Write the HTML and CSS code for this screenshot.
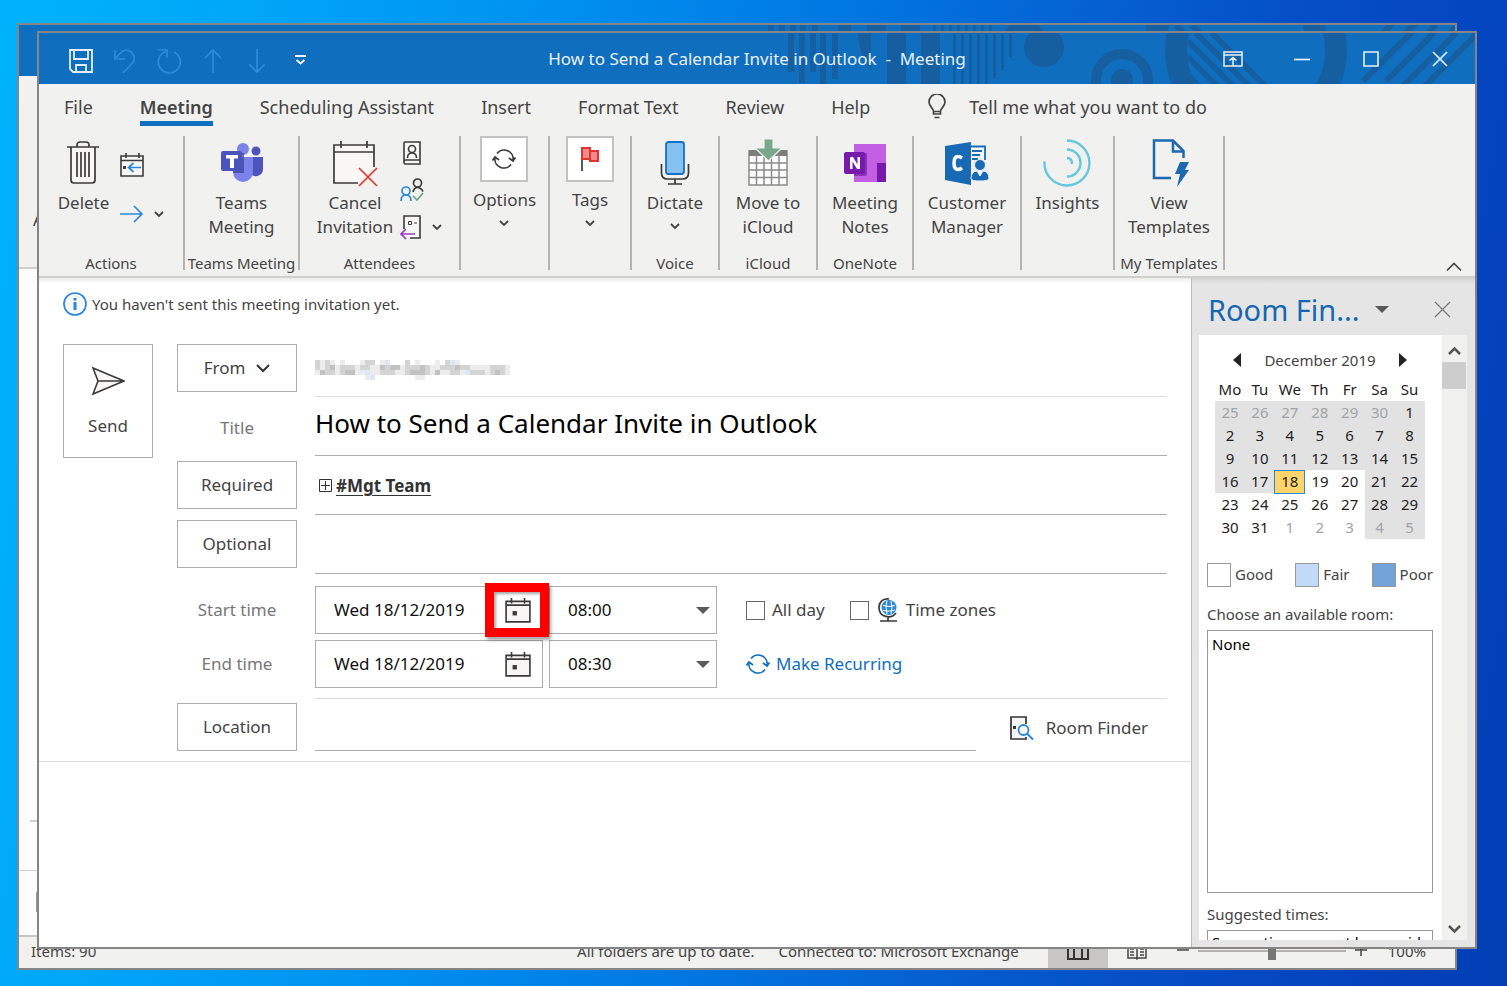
FILE: index.html
```html
<!DOCTYPE html>
<html lang="en">
<head>
<meta charset="utf-8">
<title>How to Send a Calendar Invite in Outlook - Meeting</title>
<link rel="stylesheet" href="styles.css">
</head>
<body>
<svg class="defs" aria-hidden="true">
  <defs>
    <symbol id="pattern" viewBox="775 33 700 51">
      <g fill="#155fa0">
        <path d="M788 33h6v39h-6zM799 33h6v50h-6zM810 33h6v39h-6zM820 33h6v51h-6zM832 33h6v46h-6zM858 33h13v37q-12-14-13-37zM887 33h19v51h-19zM921 33h19v51h-19z"/>
        <path d="M953 33h3v51h-3zM961 33h3v51h-3zM969 33h3v51h-3zM977 33h3v51h-3zM985 33h3v51h-3zM993 33h3v46h-3zM1001 33h3v38h-3zM1009 33h3v24h-3z"/>
        <circle cx="1044" cy="47" r="20"/>
        <circle cx="1122" cy="80" r="11"/>
      </g>
      <g fill="none" stroke="#155fa0">
        <circle cx="1122" cy="80" r="26" stroke-width="10"/>
        <circle cx="1256" cy="50" r="80" stroke-width="22"/>
        <path stroke-width="6" d="M1188 75l10 10M1188 57l29 29M1188 41l45 45M1196 33l53 53M1212 33l53 53M1363 81l50-50M1386 81l50-50M1402 87l54-54M1424 87l54-54"/>
      </g>
    </symbol>
    <symbol id="chev" viewBox="0 0 10 6"><path d="M1 1l4 4 4-4" fill="none" stroke="#444" stroke-width="1.8"/></symbol>
    <symbol id="recur" viewBox="0 0 24 20">
      <path d="M5 4.500A9 9 0 0 1 21 11.500M19 15.500A9 9 0 0 1 3 8.500M.5 11.500L3 8l4 3M17 9l4 3 2.500-3.500" fill="none" stroke="currentColor" stroke-width="1.700"/>
    </symbol>
    <symbol id="cal" viewBox="0 0 24 24">
      <path d="M1 4h22v19H1z" fill="#f8f7f6" stroke="#3a3a3a" stroke-width="1.500"/>
      <path d="M1 7.500h22M6 1v5M18 1v5" stroke="#3a3a3a" stroke-width="1.500" fill="none"/>
      <path d="M7 13h4v4H7z" fill="#3a3a3a"/>
    </symbol>
  </defs>
</svg>

<div class="window window-back">
  <div class="back-title"><svg class="pattern"><use href="#pattern"/></svg></div>
  <div class="back-ribbon">A</div>
  <div class="back-body">
    <i class="stub stub-a"></i><i class="stub stub-b"></i><i class="stub stub-c"></i>
  </div>
  <footer class="status">
    <span>Items: 90</span>
    <span class="status-sync">All folders are up to date.</span>
    <span class="status-conn">Connected to: Microsoft Exchange</span>
    <button class="view on" aria-label="Normal view"><svg width="24" height="16" viewBox="0 0 24 16"><path d="M2 0v14h20V0M8 0v14M16 0v14" fill="none" stroke="#333" stroke-width="2"/></svg></button>
    <button class="view" aria-label="Reading view"><svg width="20" height="16" viewBox="0 0 20 16"><path d="M1 1h8l1 1 1-1h8v12h-8l-1 1-1-1H1zM10 2v12M3 4h4M3 7h4M3 10h4M13 4h4M13 7h4M13 10h4" fill="none" stroke="#444" stroke-width="1.500"/></svg></button>
    <button class="zoom-btn" aria-label="Zoom out"><svg width="12" height="12" viewBox="0 0 12 12"><path d="M0 5h12" stroke="#444" stroke-width="1.500"/></svg></button>
    <input class="zoom" type="range" aria-label="Zoom" min="0" max="100" value="50">
    <button class="zoom-btn zoom-in" aria-label="Zoom in"><svg width="12" height="12" viewBox="0 0 12 12"><path d="M0 5h12M6 0v11" stroke="#444" stroke-width="1.500"/></svg></button>
    <span class="percent">100%</span>
  </footer>
</div>

<div class="window window-front">
  <header class="titlebar">
    <svg class="pattern"><use href="#pattern"/></svg>
    <div class="quick">
      <button aria-label="Save"><svg width="26" height="26" viewBox="0 0 26 26" fill="none" stroke="#e3eef8" stroke-width="1.800"><path d="M2 2h22v22H5l-3-3zM6 2v9h14V2M8 24v-7h10v7"/></svg></button>
      <button aria-label="Undo"><svg width="26" height="26" viewBox="0 0 26 26" fill="none" stroke="#2f8bdb" stroke-width="1.700"><path d="M3 2v9h10M3 11l7-7.500a8 8 0 0 1 11 11L11 25"/></svg></button>
      <button aria-label="Redo"><svg width="26" height="26" viewBox="0 0 26 26" fill="none" stroke="#2f8bdb" stroke-width="1.700"><path d="M2 2h9v8M10 3.500A11 11 0 1 0 18 4"/></svg></button>
      <button aria-label="Previous"><svg width="26" height="26" viewBox="0 0 26 26" fill="none" stroke="#2f8bdb" stroke-width="1.700"><path d="M13 25V2M5 10l8-8 8 8"/></svg></button>
      <button aria-label="Next"><svg width="26" height="26" viewBox="0 0 26 26" fill="none" stroke="#2f8bdb" stroke-width="1.700"><path d="M13 1v23M5 16l8 8 8-8"/></svg></button>
      <button aria-label="Customize toolbar"><svg width="26" height="26" viewBox="0 0 26 26" fill="none" stroke="#eef5fb" stroke-width="2"><path d="M7 8h11M8.500 12l4 3.500 4-3.500"/></svg></button>
    </div>
    <h1 class="caption">How to Send a Calendar Invite in Outlook&nbsp; -&nbsp; Meeting</h1>
    <div class="controls">
      <button aria-label="Ribbon display options"><svg width="20" height="16" viewBox="0 0 20 16" fill="none" stroke="#e8f1f9" stroke-width="1.500"><path d="M1 1h18v14H1zM1 4h18M10 15V6.500M6.500 9.500L10 6.500l3.500 3"/></svg></button>
      <button aria-label="Minimize"><svg width="16" height="16" viewBox="0 0 16 16"><path d="M0 8.500h16" stroke="#e8f1f9" stroke-width="1.700"/></svg></button>
      <button aria-label="Maximize"><svg width="16" height="16" viewBox="0 0 16 16"><path d="M1 1h14v14H1z" fill="none" stroke="#e8f1f9" stroke-width="1.600"/></svg></button>
      <button aria-label="Close"><svg width="16" height="16" viewBox="0 0 16 16"><path d="M1 1l14 14M15 1L1 15" stroke="#e8f1f9" stroke-width="1.700"/></svg></button>
    </div>
  </header>

  <nav class="tabs">
    <a href="#file">File</a>
    <a href="#meeting" class="active">Meeting</a>
    <a href="#scheduling">Scheduling Assistant</a>
    <a href="#insert">Insert</a>
    <a href="#format">Format Text</a>
    <a href="#review">Review</a>
    <a href="#help">Help</a>
    <button class="tell"><svg width="18" height="26" viewBox="0 0 18 26" fill="none" stroke="#444" stroke-width="1.700"><path d="M5.500 20v-3c0-2.500-4.500-4.500-4.500-9a8 8 0 0 1 16 0c0 4.500-4.500 6.500-4.500 9v3zM5.500 17.500h7M6.500 23.500h5"/></svg>Tell me what you want to do</button>
  </nav>

  <div class="ribbon">
    <section class="group g-actions">
      <div class="tools">
        <button class="tool"><svg width="32" height="44" viewBox="0 0 32 44" fill="none" stroke="#3b3b3b" stroke-width="1.700"><path d="M4 6v33a3 3 0 0 0 3 3h18a3 3 0 0 0 3-3V6" fill="#f8f7f6"/><path d="M0 6h32M10 6V4a3 3 0 0 1 3-3h6a3 3 0 0 1 3 3v2M10 11v25M14 11v25M18 11v25M22 11v25"/></svg>Delete</button>
        <div class="stack">
          <button aria-label="Copy to my calendar"><svg width="24" height="26" viewBox="0 0 24 26" fill="none"><path d="M1 4h22v20H1z" fill="#f8f7f6" stroke="#3b3b3b" stroke-width="1.600"/><path d="M1 8.500h22M6 1v5M19 1v5" stroke="#3b3b3b" stroke-width="1.600"/><path d="M3 14h3v3H3z" fill="#3b3b3b"/><path d="M21 15.500H9M13.500 11l-5 4.500 5 4.500" stroke="#2b88d8" stroke-width="1.700"/></svg></button>
          <button aria-label="Forward" class="row"><svg width="24" height="20" viewBox="0 0 24 20" fill="none" stroke="#2b88d8" stroke-width="1.700"><path d="M0 10h22M14 2l8 8-8 8"/></svg><svg class="chev"><use href="#chev"/></svg></button>
        </div>
      </div>
      <h2>Actions</h2>
    </section>
    <section class="group g-teams">
      <div class="tools">
        <button class="tool"><svg width="44" height="44" viewBox="0 0 44 44"><circle cx="36" cy="10" r="4.500" fill="#4f54bd"/><circle cx="23" cy="8" r="6" fill="#7b83eb"/><path d="M31 16h12v12a7 7 0 0 1-12 5z" fill="#4f54bd"/><path d="M13 16h20v15a10 10 0 0 1-20 0z" fill="#7b83eb"/><path d="M13 12h11v20H13z" fill="#3d4290" opacity=".7"/><rect x="1" y="10" width="21" height="20" rx="2" fill="#4b53bc"/><path d="M6 14h12v3.500h-4V27h-4v-9.500H6z" fill="#fff"/></svg>Teams<br>Meeting</button>
      </div>
      <h2>Teams Meeting</h2>
    </section>
    <section class="group g-attendees">
      <div class="tools">
        <button class="tool"><svg width="46" height="46" viewBox="0 0 46 46" fill="none" stroke="#3b3b3b" stroke-width="1.700"><path d="M42 27V5H2v38h24" fill="#f8f7f6"/><path d="M2 12h40M9 1v7M35 1v7"/><path d="M27 28l18 18M45 28L27 46" stroke="#e3342c"/></svg>Cancel<br>Invitation</button>
        <div class="stack stack-people">
          <button aria-label="Address book"><svg width="24" height="26" viewBox="0 0 24 26" fill="none" stroke="#3b3b3b" stroke-width="1.600"><path d="M4 23V3q0-1 1-1h15v22H5q-1 0-1-2t2-2h14" fill="#f8f7f6"/><circle cx="12" cy="9" r="3.500"/><path d="M7.500 18q0-5 4.500-5t4.500 5"/></svg></button>
          <button aria-label="Check names"><svg width="24" height="26" viewBox="0 0 24 26" fill="none" stroke-width="1.700"><circle cx="17.500" cy="6" r="4" stroke="#3b3b3b"/><path d="M13 15q1-4.500 4.500-4.500T23 14.500" stroke="#3b3b3b"/><circle cx="6" cy="14" r="4" stroke="#2b88d8"/><path d="M1 24q0-6 5-6t5 6" stroke="#2b88d8"/><path d="M13 19l4 4 6-7" stroke="#6fa287"/></svg></button>
          <button aria-label="Response options" class="row"><svg width="24" height="26" viewBox="0 0 24 26" fill="none"><path d="M4 15V2h16v22H10" fill="#f8f7f6" stroke="#3b3b3b" stroke-width="1.600"/><path d="M8.500 7.500h3v3h-3zM14 9h3" stroke="#3b3b3b"/><path d="M15 20H2M6 15l-5 5 5 5" stroke="#9b3fc4" stroke-width="1.700"/></svg><svg class="chev"><use href="#chev"/></svg></button>
        </div>
      </div>
      <h2>Attendees</h2>
    </section>
    <section class="group g-options">
      <button class="tool"><span class="tile"><svg width="24" height="20" class="ink"><use href="#recur"/></svg></span>Options<svg class="chev"><use href="#chev"/></svg></button>
    </section>
    <section class="group g-tags">
      <button class="tool"><span class="tile"><svg width="18" height="26" viewBox="0 0 18 26"><path d="M1 3v22" stroke="#3b3b3b" stroke-width="1.700"/><path d="M1 2h8v11H1zM9 5h8v10H9z" fill="#f48a8a" stroke="#e3342c" stroke-width="2"/></svg></span>Tags<svg class="chev"><use href="#chev"/></svg></button>
    </section>
    <section class="group g-voice">
      <div class="tools">
        <button class="tool"><svg width="30" height="44" viewBox="0 0 30 44" fill="none"><path d="M1.500 23v9q0 6 6 6h15q6 0 6-6v-9M15 38v4.500M8 43h14" stroke="#3b3b3b" stroke-width="1.700"/><rect x="6" y="1" width="18" height="32" rx="2.500" fill="#86bff2" stroke="#1a6fc0" stroke-width="1.800"/></svg>Dictate<svg class="chev"><use href="#chev"/></svg></button>
      </div>
      <h2>Voice</h2>
    </section>
    <section class="group g-icloud">
      <div class="tools">
        <button class="tool"><svg width="40" height="48" viewBox="0 0 40 48"><path d="M1 12h38v34H1z" fill="#fff" stroke="#8a8a8a" stroke-width="1.500"/><path d="M1 11h38v6H1z" fill="#7d7d7d"/><path d="M1 24h38M1 31h38M1 38.500h38M8.500 16v30M16 16v30M23.500 16v30M31 16v30" stroke="#8a8a8a" stroke-width="1.500"/><path d="M16 0h9v9h9L20.500 22 7 9h9z" fill="#7aa88f" stroke="#f1f1ef" stroke-width="1.200"/></svg>Move to<br>iCloud</button>
      </div>
      <h2>iCloud</h2>
    </section>
    <section class="group g-onenote">
      <div class="tools">
        <button class="tool"><svg width="44" height="40" viewBox="0 0 44 40"><path d="M11 1h32v38H11z" fill="#c25fe3"/><path d="M34 20h9v19h-9z" fill="#7719aa"/><path d="M11 10h13v21q0 2-2 2H11z" fill="#8a35b5"/><rect x="1" y="9" width="21" height="22" rx="2" fill="#7719aa"/><path d="M7 26V14h3l4.500 7.500V14H17v12h-3l-4.500-7.500V26z" fill="#fff"/></svg>Meeting<br>Notes</button>
      </div>
      <h2>OneNote</h2>
    </section>
    <section class="group g-customer">
      <div class="tools">
        <button class="tool"><svg width="44" height="44" viewBox="0 0 44 44"><path d="M24 5.500h16V19M27 10h10M27 14h8M27 18h6" fill="#fff" stroke="#186ab4" stroke-width="1.800"/><path d="M0 5L26 1v43L0 39z" fill="#186ab4"/><path d="M17 17q-2-1.500-4-1.500-4 0-4 6.500t4 6.500q2 0 4-1.500" fill="none" stroke="#fff" stroke-width="3.500"/><circle cx="35" cy="24" r="5.500" fill="#186ab4" stroke="#f1f1ef"/><path d="M26 38q0-8 6-8l3 5 3-5q6 0 6 8-1 2-9 2t-9-2z" fill="#186ab4" stroke="#f1f1ef"/></svg>Customer<br>Manager</button>
      </div>
    </section>
    <section class="group g-insights">
      <div class="tools">
        <button class="tool"><svg width="48" height="48" viewBox="0 0 48 48" fill="none" stroke="#66c8dc" stroke-width="2.400"><path d="M24 1.500a22.500 22.500 0 1 1-22.500 21M24 10.500a13.500 13.500 0 0 1 0 27M24 19q5 0 5 6"/></svg>Insights</button>
      </div>
    </section>
    <section class="group g-templates">
      <div class="tools">
        <button class="tool"><svg width="40" height="48" viewBox="0 0 40 48" fill="none"><path d="M22 39H5V1.500h19L34.500 12v7M24 2v10.500h10" stroke="#1d68b1" stroke-width="2.500"/><path d="M31 23h9l-4 8h4L28 48l3-13h-5z" fill="#1d68b1"/></svg>View<br>Templates</button>
      </div>
      <h2>My Templates</h2>
    </section>
    <button class="collapse" aria-label="Collapse the ribbon"><svg width="16" height="10" viewBox="0 0 16 10"><path d="M1 8.500l7-7 7 7" fill="none" stroke="#444" stroke-width="1.700"/></svg></button>
  </div>

  <div class="content">
    <main class="form">
      <p class="info"><svg width="24" height="24" viewBox="0 0 24 24"><circle cx="12" cy="12" r="11" fill="#f8f7f6" stroke="#2b88d8" stroke-width="1.700"/><path d="M10.500 6h3v2.500h-3zM10.500 10h3v8h-3z" fill="#2b88d8"/></svg>You haven't sent this meeting invitation yet.</p>
      <div class="compose">
        <button class="send"><svg width="34" height="30" viewBox="0 0 34 30" fill="#f8f7f6" stroke="#3b3b3b" stroke-width="1.600"><path d="M2 2l31 13L2 28l5-13zM7 15h25"/></svg>Send</button>
        <div class="fields">
          <div class="field from">
            <button class="box">From<svg class="chev-lg" viewBox="0 0 14 9"><path d="M1 1l6 6 6-6" fill="none" stroke="#333" stroke-width="2"/></svg></button>
            <div class="line light"><svg class="mosaic" width="195" height="20" viewBox="0 0 39 4" shape-rendering="crispEdges" role="img" aria-label="Hidden address">
              <path fill="#ececec" d="M1 0h1v1h-1zM3 0h1v1h-1zM5 0h1v3h-1zM9 0h3v1h-3zM13 0h2v1h-2zM20 0h1v1h-1zM24 0h1v1h-1zM27 0h2v1h-2zM0 1h39v2H0zM10 3h2v1h-2zM20 3h2v1h-2z"/>
              <path fill="#d4d4d4" d="M0 0h1v2h-1zM2 0h1v1h-1zM10 0h2v1h-2zM18 0h1v1h-1zM26 0h1v1h-1zM2 1h2v2h-2zM5 1h3v2h-3zM9 1h2v1h-2zM13 1h3v2h-3zM18 1h5v2h-5zM25 1h6v1h-6zM27 2h2v1h-2zM31 2h3v1h-3zM35 1h3v2h-3z"/>
              <path fill="#c2c2c2" d="M1 2h1v1h-1zM3 1h1v1h-1zM6 2h2v1h-2zM13 1h1v1h-1zM15 1h2v1h-2zM19 2h3v1h-3zM21 1h1v1h-1zM24 2h1v1h-1zM28 1h1v1h-1zM36 2h1v1h-1z"/>
              <path fill="#dbe9f5" d="M14 0h1v1h-1zM27 0h1v1h-1zM10 2h1v1h-1zM11 3h1v1h-1zM30 2h1v1h-1z"/>
            </svg></div>
          </div>
          <div class="field">
            <label for="title">Title</label>
            <input id="title" class="line title-input" value="How to Send a Calendar Invite in Outlook">
          </div>
          <div class="field">
            <button class="box">Required</button>
            <div class="line required"><button class="expand" aria-label="Expand list"><svg width="13" height="13" viewBox="0 0 13 13"><path d="M.5.5h12v12H.5zM2 6.500h9M6.500 2v9" fill="none" stroke="#333"/></svg></button><a href="#mgt">#Mgt Team</a></div>
          </div>
          <div class="field">
            <button class="box">Optional</button>
            <input class="line" aria-label="Optional attendees">
          </div>
          <div class="times">
            <div class="time-row">
              <label for="start-date">Start time</label>
              <div class="date"><input id="start-date" value="Wed 18/12/2019"><button class="pick" aria-label="Pick start date"><svg width="26" height="26"><use href="#cal"/></svg><span class="marker"></span></button></div>
              <div class="clock"><select aria-label="Start hour"><option>08:00</option></select><i class="tri"></i></div>
              <div class="extras">
                <label class="check"><input type="checkbox">All day</label>
                <label class="check"><input type="checkbox"><svg width="20" height="24" viewBox="0 0 20 24" fill="none"><circle cx="11" cy="9.500" r="7.500" fill="#2b88d8"/><path d="M5 7.500q6 2 12 0M5 12.500q6 1.500 12-.5M9 3q-2 6 0 13M13 3q2 6 0 13" stroke="#fff"/><path d="M11 1C4 0 1 5 1 9.500c0 10 12 12 17 5.500M10 19.500V23M2 23h17" stroke="#3b3b3b" stroke-width="1.700"/></svg>Time zones</label>
              </div>
            </div>
            <div class="time-row">
              <label for="end-date">End time</label>
              <div class="date"><input id="end-date" value="Wed 18/12/2019"><button class="pick" aria-label="Pick end date"><svg width="26" height="26"><use href="#cal"/></svg></button></div>
              <div class="clock"><select aria-label="End hour"><option>08:30</option></select><i class="tri"></i></div>
              <div class="extras"><button class="recurring"><svg width="24" height="20"><use href="#recur"/></svg>Make Recurring</button></div>
            </div>
          </div>
          <div class="location">
            <button class="box">Location</button>
            <div class="location-row">
              <input class="location-input" aria-label="Location">
              <button class="finder"><svg width="25" height="26" viewBox="0 0 25 26" fill="none"><path d="M17 9V2H2v22h15v-2" fill="#f8f7f6" stroke="#333" stroke-width="1.700"/><path d="M4 11h3v3H4z" fill="#333"/><circle cx="14.500" cy="15" r="5" stroke="#2b88d8" stroke-width="1.800" fill="#f8f7f6"/><path d="M18 18.500l6 6" stroke="#2b88d8" stroke-width="2"/></svg>Room Finder</button>
            </div>
          </div>
        </div>
      </div>
      <textarea class="message" aria-label="Message"></textarea>
    </main>

    <aside class="side">
      <div class="side-head">
        <h2>Room Fin...</h2>
        <button aria-label="Pane options"><i class="tri"></i></button>
        <button class="side-close" aria-label="Close pane"><svg width="17" height="17" viewBox="0 0 17 17"><path d="M1 1l15 15M16 1L1 16" stroke="#777" stroke-width="1.200"/></svg></button>
      </div>
      <div class="side-body">
        <div class="panel">
          <div class="month"><button aria-label="Previous month"><i class="left"></i></button><span>December 2019</span><button aria-label="Next month"><i class="right"></i></button></div>
          <table class="days">
            <thead><tr><th>Mo</th><th>Tu</th><th>We</th><th>Th</th><th>Fr</th><th>Sa</th><th>Su</th></tr></thead>
            <tbody>
              <tr class="busy"><td class="out">25</td><td class="out">26</td><td class="out">27</td><td class="out">28</td><td class="out">29</td><td class="out">30</td><td>1</td></tr>
              <tr class="busy"><td>2</td><td>3</td><td>4</td><td>5</td><td>6</td><td>7</td><td>8</td></tr>
              <tr class="busy"><td>9</td><td>10</td><td>11</td><td>12</td><td>13</td><td>14</td><td>15</td></tr>
              <tr><td class="off">16</td><td class="off">17</td><td class="today">18</td><td>19</td><td>20</td><td class="off">21</td><td class="off">22</td></tr>
              <tr><td>23</td><td>24</td><td>25</td><td>26</td><td>27</td><td class="off">28</td><td class="off">29</td></tr>
              <tr><td>30</td><td>31</td><td class="out">1</td><td class="out">2</td><td class="out">3</td><td class="off out">4</td><td class="off out">5</td></tr>
            </tbody>
          </table>
          <div class="legend"><span><i></i>Good</span><span><i class="fair"></i>Fair</span><span><i class="poor"></i>Poor</span></div>
          <label for="rooms">Choose an available room:</label>
          <select id="rooms" class="rooms" size="10"><option>None</option></select>
          <div class="suggest-label">Suggested times:</div>
          <div class="suggest">Suggestions cannot be provided</div>
        </div>
        <div class="scroll">
          <svg width="13" height="10" viewBox="0 0 13 10"><path d="M1 8l5.500-5.500L12 8" fill="none" stroke="#555" stroke-width="2.500"/></svg>
          <i class="thumb"></i>
          <svg width="13" height="10" viewBox="0 0 13 10"><path d="M1 2l5.500 5.500L12 2" fill="none" stroke="#555" stroke-width="2.500"/></svg>
        </div>
      </div>
    </aside>
  </div>
</div>
</body>
</html>
```
FILE: styles.css
```css
* { box-sizing: border-box; }

body {
  margin: 0;
  height: 100vh;
  overflow: hidden;
  position: relative;
  font-family: "Noto Sans", sans-serif;
  font-size: 17px;
  line-height: 24px;
  color: #444;
  background: linear-gradient(100deg, #00b2fc 0%, #00a6f8 15%, #0092f0 32%, #0078e2 50%, #0561d2 65%, #054ec6 78%, #0444bf 90%, #033eb4 100%);
}

h1, h2, p { margin: 0; font-weight: 400; }

button, input, select, textarea {
  font: inherit;
  color: inherit;
  border: 0;
  padding: 0;
  margin: 0;
  background: none;
  border-radius: 0;
  outline: 0;
}

button { display: flex; align-items: center; justify-content: center; }
svg { display: block; flex: none; }
a { color: inherit; text-decoration: none; }

.defs { position: absolute; width: 0; height: 0; }
.chev { width: 10px; height: 6px; }

/* Windows */
.window {
  position: absolute;
  display: flex;
  flex-direction: column;
  border: 2px solid #858585;
  overflow: hidden;
}
.window-back { inset: 23px 50px 16px 17px; background: #fdfdfd; }
.window-front { inset: 31px 30px 37px 37px; background: #fff; }
.pattern { position: absolute; right: 0; top: 0; width: 700px; height: 51px; }

.back-title { height: 51px; background: #106ebe; }
.back-ribbon {
  height: 193px;
  padding: 132px 0 0 14px;
  background: #f1f1ef;
  border-bottom: 2px solid #cfcfcd;
}
.back-body {
  flex: 1;
  display: flex;
  flex-direction: column;
  align-items: flex-start;
  border-bottom: 2px solid #c8c6c4;
}
.stub { display: block; }
.stub-a { width: 20px; height: 2px; margin: 551px 0 0 11px; background: #d0d0d0; }
.stub-b { width: 30px; height: 1px; margin-top: 48px; background: #d0d0d0; }
.stub-c { width: 2px; height: 20px; margin: 21px 0 0 17px; background: #999; }

.status {
  display: flex;
  align-items: center;
  height: 31px;
  flex: none;
  padding: 0 29px 4px 12px;
  background: #f1f1ef;
  font-size: 15px;
}
.status-sync { margin-left: auto; }
.status-conn { margin: 0 29px 0 24px; }
.view { width: 58px; height: 31px; margin-bottom: -4px; }
.view.on { width: 60px; background: #c8c6c4; }
.zoom-btn { width: 12px; margin-left: 11px; }
.zoom-in { margin-left: 9px; }
.percent { margin-left: 21px; }
.zoom { appearance: none; width: 148px; height: 16px; margin-left: 9px; background: linear-gradient(#b3b0ad, #b3b0ad) center / 100% 2px no-repeat; }
.zoom::-webkit-slider-thumb { appearance: none; width: 8px; height: 18px; background: #777; }

/* Title bar */
.titlebar {
  position: relative;
  display: grid;
  grid-template-columns: 1fr auto 1fr;
  align-items: center;
  height: 51px;
  flex: none;
  background: #106ebe;
  color: #e8f1f9;
}
.quick { display: flex; gap: 18px; padding: 5px 0 0 29px; }
.caption { position: relative; font-size: 17px; }
.controls { position: relative; display: flex; justify-content: flex-end; padding-right: 27px; }
.controls button { width: 16px; height: 24px; margin-left: 53px; }

/* Tabs */
.tabs {
  display: flex;
  align-items: center;
  gap: 47px;
  height: 46px;
  flex: none;
  padding-left: 25px;
  background: #f1f1ef;
  font-size: 18px;
}
.tabs a { height: 34px; border-bottom: 5px solid transparent; padding: 3px 0 2px; margin-top: 4px; }
.tabs .active { font-weight: 600; border-color: #106ebe; }
.tell { gap: 23px; margin-left: 11px; }

/* Ribbon */
.ribbon {
  display: flex;
  height: 148px;
  flex: none;
  padding-top: 6px;
  background: #f1f1ef;
  border-bottom: 2px solid #cfcfcd;
}
.group {
  display: flex;
  flex-direction: column;
  justify-content: space-between;
  align-items: center;
  height: 134px;
  flex: none;
  border-right: 2px solid #b6b3b0;
}
.group h2 { font-size: 15px; line-height: 14px; white-space: nowrap; }
.tools { display: flex; }
.tool { flex-direction: column; justify-content: flex-start; white-space: nowrap; line-height: 24px; }
.tool > svg:first-child { height: 48px; margin: 3px 0 4px; }
.tool .chev { margin-top: 8px; }
.tile {
  display: flex;
  align-items: center;
  justify-content: center;
  width: 48px;
  height: 46px;
  margin-bottom: 6px;
  border: 2px solid #c2c2c0;
  background: #fff;
}
.ink { color: #3b3b3b; }
.stack { display: flex; flex-direction: column; align-items: flex-start; gap: 26px; padding-top: 16px; }
.stack-people { gap: 11px; padding-top: 4px; }
.row { gap: 10px; }
.g-actions { width: 146px; }
.g-actions .tools { gap: 11px; }
.g-teams { width: 115px; }
.g-attendees { width: 161px; }
.g-attendees .tools { gap: 7px; }
.g-attendees .row { gap: 8px; }
.g-options { width: 89px; }
.g-tags { width: 82px; }
.g-voice { width: 88px; }
.g-icloud { width: 98px; }
.g-onenote { width: 96px; }
.g-customer { width: 108px; }
.g-insights { width: 93px; }
.g-templates { width: 110px; }
.collapse { align-self: flex-end; margin: 0 13px 4px auto; }

/* Content */
.content { flex: 1; display: flex; min-height: 0; }
.form {
  flex: 1;
  display: flex;
  flex-direction: column;
  min-width: 0;
  background: linear-gradient(#ececeb, #fff 6px);
}
.info { display: flex; align-items: center; gap: 5px; padding: 14px 24px 0; font-size: 15px; }
.compose { display: flex; gap: 24px; padding: 28px 24px 10px; border-bottom: 1px solid #ddd; }
.send {
  flex: none;
  flex-direction: column;
  gap: 18px;
  width: 90px;
  height: 114px;
  padding-top: 2px;
  border: 1px solid #adadad;
}
.fields { flex: 1; min-width: 0; display: flex; flex-direction: column; gap: 5px; }
.field, .location { display: grid; grid-template-columns: 120px minmax(0, 1fr); column-gap: 18px; }
.field { height: 54px; }
.field.from { height: 53px; }
.box { height: 48px; border: 1px solid #adadad; gap: 11px; }
.chev-lg { width: 14px; height: 9px; }
.field label, .time-row > label { text-align: center; color: #777; align-self: center; }
.field label { padding-bottom: 3px; }
.line { display: flex; align-items: center; width: 100%; height: 100%; border-bottom: 1px solid #adadad; }
.line.light { border-color: #ddd; }
.title-input { font-size: 26px; color: #000; padding-bottom: 11px; }
.required { gap: 4px; padding: 0 0 4px 4px; color: #333; }
.required a { font-weight: 700; text-decoration: underline; text-underline-offset: 3px; text-decoration-thickness: 1px; }

.times { display: flex; flex-direction: column; gap: 6px; padding-top: 7px; }
.time-row { display: grid; grid-template-columns: 132px 228px 168px 1fr; column-gap: 6px; align-items: center; color: #111; }
.time-row > label { width: 120px; }
.date { display: flex; height: 48px; border: 1px solid #adadad; }
.date input { flex: 1; min-width: 0; padding-left: 18px; }
.pick { position: relative; width: 48px; }
.marker {
  position: absolute;
  top: -4px;
  left: -9px;
  width: 64px;
  height: 54px;
  border: 9px solid #f00;
  box-shadow: 2px 3px 3px rgba(0, 0, 0, .35), inset 2px 2px 3px rgba(0, 0, 0, .35);
  z-index: 1;
}
.clock { position: relative; height: 48px; border: 1px solid #adadad; }
.clock select { appearance: none; width: 100%; height: 100%; padding-left: 18px; }
.tri { display: block; width: 0; height: 0; border: 7px solid transparent; border-top: 7px solid #5a5a5a; border-bottom: 0; }
.clock .tri { position: absolute; right: 6px; top: 20px; pointer-events: none; }
.extras { display: flex; align-items: center; gap: 25px; padding-left: 23px; color: #444; }
.check { display: flex; align-items: center; gap: 7px; white-space: nowrap; }
.check svg { margin: 0 1px 0 2px; }
.check input { appearance: none; width: 19px; height: 19px; border: 1px solid #666; background: #fff; }
.recurring { gap: 6px; color: #106ebe; }
.location { padding-top: 10px; }
.location-row { display: flex; align-items: center; gap: 33px; height: 53px; margin-top: -5px; border-top: 1px solid #ddd; }
.location-input { flex: 1; min-width: 0; height: 52px; border-bottom: 1px solid #adadad; }
.finder { gap: 12px; padding: 5px 19px 0 0; white-space: nowrap; }
.message { flex: 1; width: 100%; resize: none; background: #fff; }

/* Room finder pane */
.side {
  width: 284px;
  flex: none;
  display: flex;
  flex-direction: column;
  padding: 0 8px 7px 7px;
  border-left: 1px solid #bdbdbd;
  background: linear-gradient(#d4d4d4, #e5e5e5 6px);
  font-size: 15px;
}
.side-head { display: flex; align-items: center; height: 57px; flex: none; padding: 6px 16px 0 9px; }
.side-head h2 { font-size: 29px; line-height: 40px; color: #1666b0; margin-right: 15px; white-space: nowrap; }
.side-close { margin-left: auto; }
.side-body { flex: 1; display: flex; min-height: 0; }
.panel { flex: 1; min-width: 0; padding: 14px 9px 0 8px; overflow: hidden; background: #fff; display: flex; flex-direction: column; }
.month { display: flex; justify-content: space-between; align-items: center; padding: 0 26px; line-height: 22px; flex: none; }
.left, .right { display: block; border: 7px solid transparent; }
.left { border-left: 0; border-right: 8px solid #222; }
.right { border-right: 0; border-left: 8px solid #222; }
.days { width: 210px; margin: 7px 0 24px 8px; border-collapse: collapse; table-layout: fixed; color: #222; flex: none; }
.days th, .days td { padding: 0; height: 23px; line-height: 21px; text-align: center; font-weight: 400; }
.busy td, .days .off { background: #e2e2e2; }
.days .out { color: #a0a4a8; }
.days .today { background: #ffd56b; border: 1px solid #2b88d8; }
.legend { display: flex; justify-content: space-between; flex: none; margin-bottom: 15px; }
.legend span { display: flex; gap: 4px; line-height: 22px; }
.legend i { width: 24px; height: 24px; border: 1px solid #999; }
.legend .fair { background: #c2daf8; }
.legend .poor { background: #73a4d8; }
.rooms { width: 226px; height: 263px; flex: none; margin: 4px 0 9px; padding: 3px 0; overflow: hidden; border: 1px solid #999; color: #000; }
.rooms option { padding: 0 4px; line-height: 21px; }
.suggest-label { flex: none; margin-bottom: 4px; }
.suggest { flex: none; padding: 0 4px; line-height: 22px; border: 1px solid #999; color: #000; white-space: nowrap; overflow: hidden; width: 226px; }
.scroll { width: 25px; flex: none; display: flex; flex-direction: column; align-items: center; padding: 11px 0 6px; background: #f1f1ef; }
.thumb { width: 24px; height: 27px; margin: 6px 1px auto 0; background: #cdcdcd; }
```
